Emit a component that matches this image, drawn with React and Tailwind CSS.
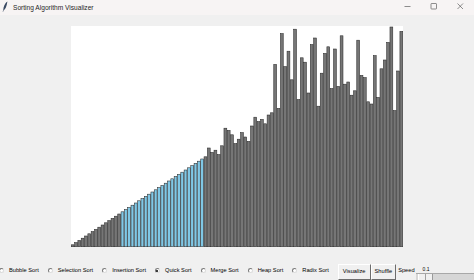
import React from 'react';

const sortedPart = Array.from({ length: 40 }, (_, i) => i + 1);
const restPart = [41, 45, 43, 44, 42, 46, 54, 53, 51, 47, 49, 52, 50, 48, 55, 59, 57, 58, 56, 60, 61, 83, 63, 97, 82, 89, 76, 99, 67, 86, 84, 70, 92, 95, 64, 79, 88, 91, 72, 90, 73, 96, 74, 75, 69, 71, 94, 78, 77, 66, 65, 87, 68, 81, 85, 93, 100, 62, 80, 98];
const data = [...sortedPart, ...restPart];

const algorithms = ['Bubble Sort', 'Selection Sort', 'Insertion Sort', 'Quick Sort', 'Merge Sort', 'Heap Sort', 'Radix Sort'];

const CANVAS_W = 332;
const CANVAS_H = 221;

const Feather = () => (
  <svg width="6" height="11" viewBox="0 0 6 11">
    <path d="M5.4 0.4 C3.6 1.6 2.2 4 1.6 6.6 L1.2 9.2 L0.6 10.6 L1.1 10.7 L1.7 9.3 C3.4 8.2 4.6 5.6 5.4 0.4 Z" fill="#3b4a63" />
  </svg>
);

const WindowControls = () => (
  <div className="flex items-center h-full">
    <svg width="26" height="15" viewBox="0 0 26 15">
      <line x1="8.5" y1="6.5" x2="14.5" y2="6.5" stroke="#444" strokeWidth="0.6" />
    </svg>
    <svg width="26" height="15" viewBox="0 0 26 15">
      <rect x="9" y="3.5" width="5.5" height="5.5" rx="0.6" fill="none" stroke="#444" strokeWidth="0.6" />
    </svg>
    <svg width="26" height="15" viewBox="0 0 26 15">
      <path d="M9.5 3.5 L15 9 M15 3.5 L9.5 9" stroke="#444" strokeWidth="0.6" />
    </svg>
  </div>
);

const BarCanvas = () => {
  const step = CANVAS_W / data.length;
  return (
    <svg width={CANVAS_W} height={CANVAS_H} viewBox={`0 0 ${CANVAS_W} ${CANVAS_H}`} className="bg-white block">
      {data.map((v, i) => {
        const h = v * 2.2;
        const active = i >= 15 && i <= 39;
        return (
          <rect
            key={i}
            x={i * step + 0.25}
            y={CANVAS_H - h}
            width={step - 0.5}
            height={h - 0.25}
            fill={active ? '#80c8e6' : '#767676'}
            stroke="#2a2a2a"
            strokeWidth="0.55"
          />
        );
      })}
    </svg>
  );
};

const Radio = ({ checked }) => (
  <span className="relative w-[5px] h-[5px] rounded-full bg-white border-[0.6px] border-t-[#7a7a7a] border-l-[#7a7a7a] border-r-[#dcdcdc] border-b-[#dcdcdc] flex items-center justify-center">
    {checked && <span className="w-[2px] h-[2px] rounded-full bg-black" />}
  </span>
);

export default function App() {
  return (
    <div className="w-[474px] h-[280px] overflow-hidden bg-[#f0f0f0] flex flex-col font-['Liberation_Sans',Arial,sans-serif] text-black">
      {/* Title bar */}
      <div className="h-[15px] flex items-center justify-between bg-[#f7f4f4]">
        <div className="flex items-center">
          <span className="ml-[2px] mt-[-2px]"><Feather /></span>
          <span className="ml-[5px] text-[6.6px] text-[#1f1f1f]">Sorting Algorithm Visualizer</span>
        </div>
        <WindowControls />
      </div>

      {/* Canvas */}
      <div className="flex justify-center mt-[11px]">
        <BarCanvas />
      </div>

      {/* Controls */}
      <div className="flex items-center h-[18px] mt-[15px] text-[5.7px] leading-none">
        {algorithms.map((a) => (
          <label key={a} className="flex items-center pr-[9px] first:ml-[-1px]">
            <Radio checked={a === 'Quick Sort'} />
            <span className="ml-[5px] whitespace-nowrap">{a}</span>
          </label>
        ))}
        <button className="h-[16px] mt-[1px] px-[4px] bg-[#f0f0f0] border-t border-l border-t-white border-l-white border-b border-r border-b-[#6d6d6d] border-r-[#6d6d6d] whitespace-nowrap">
          Visualize
        </button>
        <button className="h-[16px] mt-[1px] px-[3px] bg-[#f0f0f0] border-t border-l border-t-white border-l-white border-b border-r border-b-[#6d6d6d] border-r-[#6d6d6d] whitespace-nowrap">
          Shuffle
        </button>
        <span className="ml-[2px] whitespace-nowrap">Speed</span>
        <div className="flex-1 h-full flex flex-col ml-[1px]">
          <div className="h-[11px] w-[15px] ml-[3px] flex items-end justify-center pb-[1px] text-[5px]">0.1</div>
          <div className="flex-1 bg-[#d6d6d6] border-t border-t-[#a8a8a8] flex">
            <div className="w-[15px] ml-[2px] h-full bg-[#f0f0f0] border-l border-r border-l-white border-r-[#9a9a9a] flex justify-center">
              <div className="w-px h-full bg-[#a0a0a0]" />
            </div>
          </div>
        </div>
      </div>
    </div>
  );
}
